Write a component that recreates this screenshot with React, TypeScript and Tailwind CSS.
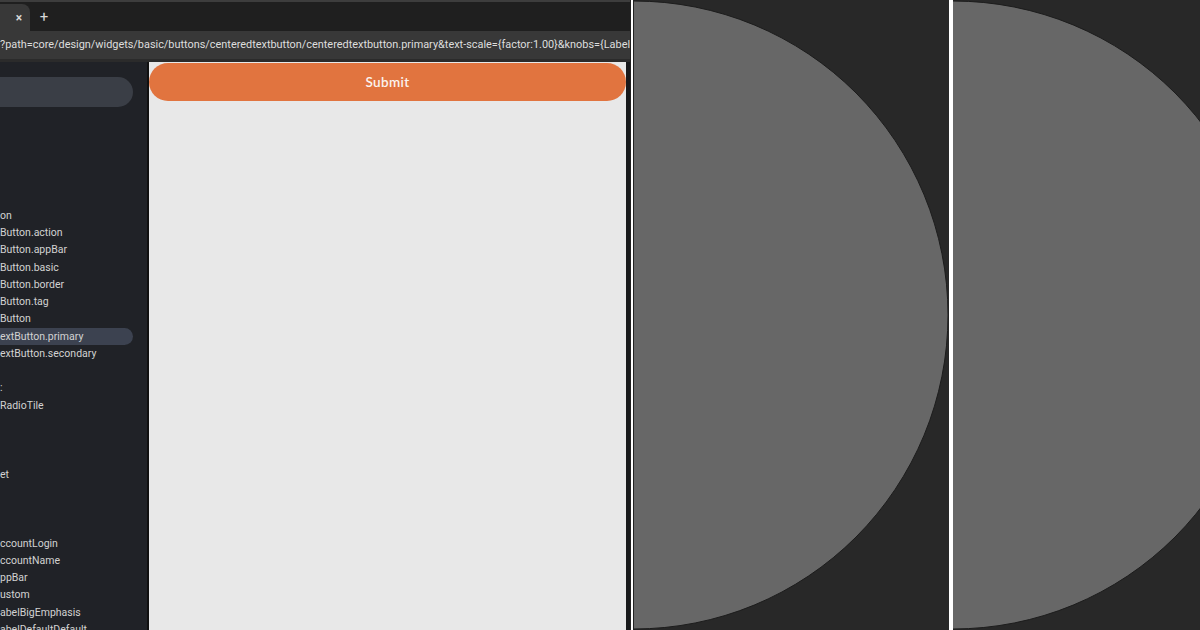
const SIDEBAR_ITEMS: Array<{ label: string; active?: boolean }> = [
  { label: "on" },
  { label: "Button.action" },
  { label: "Button.appBar" },
  { label: "Button.basic" },
  { label: "Button.border" },
  { label: "Button.tag" },
  { label: "Button" },
  { label: "extButton.primary", active: true },
  { label: "extButton.secondary" },
  { label: "" },
  { label: ":" },
  { label: "RadioTile" },
  { label: "" },
  { label: "" },
  { label: "" },
  { label: "et" },
  { label: "" },
  { label: "" },
  { label: "" },
  { label: "ccountLogin" },
  { label: "ccountName" },
  { label: "ppBar" },
  { label: "ustom" },
  { label: "abelBigEmphasis" },
  { label: "abelDefaultDefault" }
];

const URL_TEXT =
  "?path=core/design/widgets/basic/buttons/centeredtextbutton/centeredtextbutton.primary&text-scale={factor:1.00}&knobs={Label:Submit}";

function HalfCircle({ width }: { width: number }) {
  return (
    <svg width={width} height={630} viewBox={`0 0 ${width} 630`} className="block">
      <circle cx={0} cy={315} r={314} fill="#676767" stroke="#1c1c1c" strokeWidth={1} />
    </svg>
  );
}

function BrowserShot() {
  return (
    <div className="flex h-full w-[630px] shrink-0 flex-col overflow-hidden bg-[#1f1f1f] font-['Roboto',sans-serif]">
      <div className="flex h-[31px] shrink-0 items-end border-t-2 border-[#3d3d3d] bg-[#1f1f1f]">
        <div className="flex h-[27px] w-[30px] items-center justify-end rounded-tr-lg bg-[#383838] pr-[8px] text-[12px] font-bold text-[#d8d8d8]">
          ×
        </div>
        <div className="flex h-[27px] w-[28px] items-center justify-center text-[15px] text-[#d8d8d8]">+</div>
      </div>
      <div className="flex h-[28px] shrink-0 items-center overflow-hidden whitespace-nowrap bg-[#383838] text-[10.9px] text-[#dedede]">
        {URL_TEXT}
      </div>
      <div className="h-[3px] shrink-0 bg-[#2b2b2b]" />
      <div className="flex min-h-0 flex-1">
        <div className="w-[149px] shrink-0 overflow-hidden border-r-2 border-[#101010] bg-[#202227]">
          <div className="mt-[15px] h-[30px] w-[133px] rounded-r-full bg-[#3a3e46]" />
          <div className="mt-[100px]">
            {SIDEBAR_ITEMS.map((item, index) => (
              <div
                key={index}
                className={`flex h-[17.25px] w-[133px] items-center whitespace-nowrap text-[10.5px] text-[#d2d2d2] ${
                  item.active ? "rounded-r-full bg-[#3c4250]" : ""
                }`}
              >
                {item.label}
              </div>
            ))}
          </div>
        </div>
        <div className="flex-1 bg-[#e8e8e8]">
          <div className="mt-px flex h-[38px] items-center justify-center rounded-full bg-[#e1743f] font-['Lato',sans-serif] text-[13.5px] font-semibold tracking-wide text-[#fbf3ee]">
            Submit
          </div>
        </div>
        <div className="w-[4px] shrink-0 bg-[#18191b]" />
      </div>
    </div>
  );
}

export default function App() {
  return (
    <div className="flex h-[630px] w-[1200px] overflow-hidden bg-white">
      <BrowserShot />
      <div className="w-[4px] shrink-0 border-x border-[#202020] bg-white" />
      <div className="w-[315px] shrink-0 overflow-hidden bg-[#282828]">
        <HalfCircle width={315} />
      </div>
      <div className="w-[4px] shrink-0 bg-white" />
      <div className="flex-1 overflow-hidden bg-[#282828]">
        <HalfCircle width={247} />
      </div>
    </div>
  );
}
